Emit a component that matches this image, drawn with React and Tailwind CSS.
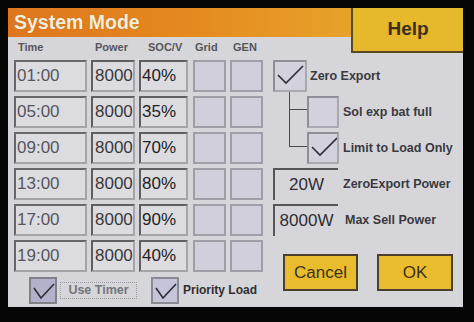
import React from 'react';

const rows = [
  { time: '01:00', power: '8000', soc: '40%' },
  { time: '05:00', power: '8000', soc: '35%' },
  { time: '09:00', power: '8000', soc: '70%' },
  { time: '13:00', power: '8000', soc: '80%' },
  { time: '17:00', power: '8000', soc: '90%' },
  { time: '19:00', power: '8000', soc: '40%' },
];

const font = { fontFamily: '"Liberation Sans", Arial, sans-serif' };

function Check({ w, h, points }) {
  return (
    <svg width={w} height={h} className="block">
      <polyline points={points} fill="none" stroke="#2e2e34" strokeWidth="1.6" />
    </svg>
  );
}

function CheckBox({ checked, className }) {
  return (
    <div className={`box-border border-2 border-t-[#8e8e96] border-l-[#8e8e96] border-r-[#a8a8b0] border-b-[#a8a8b0] ${className}`}>
      {checked && <Check w="100%" h="100%" points="3,13 11,21 28,4" />}
    </div>
  );
}

export default function App() {
  return (
    <div className="w-[474px] h-[322px] bg-[#060606] overflow-hidden pt-[8px] pl-[8px]" style={font}>
      <div className="w-[455px] h-[299px] bg-[#d6d6da] flex flex-col">
        {/* header */}
        <div className="flex items-start h-[29px] relative z-10">
          <div className="w-[343px] h-[29px] bg-gradient-to-r from-[#de761e] via-[#e4881f] to-[#e8a22a] flex items-center pl-[6px]">
            <span className="text-[19.5px] font-bold text-[#f6eedc] leading-none" style={{ textShadow: '0 0 1px #b0601a' }}>
              System Mode
            </span>
          </div>
          <div className="w-[112px] h-[45px] box-border bg-[#e6b82c] border-l-2 border-b-2 border-[#5a4a22] flex items-center justify-center">
            <span className="text-[19px] font-bold text-[#3a3018]">Help</span>
          </div>
        </div>

        {/* body */}
        <div className="flex">
          {/* table */}
          <div className="flex flex-col pl-[6px]">
            <div className="h-[23px] flex items-center pb-[2px] text-[11px] font-bold text-[#55555c]">
              <span className="w-[77px] pl-[4px]">Time</span>
              <span className="w-[48px] pl-[4px]">Power</span>
              <span className="w-[54px] pl-[9px]">SOC/V</span>
              <span className="w-[37px] pl-[2px]">Grid</span>
              <span className="w-[33px] pl-[3px]">GEN</span>
            </div>
            <div className="flex flex-col gap-[4px]">
              {rows.map((r) => (
                <div key={r.time} className="flex h-[32px]">
                  <div className="w-[73px] box-border border-2 border-t-[#66666c] border-l-[#66666c] border-r-[#a4a4aa] border-b-[#a4a4aa] bg-[#dcdce0] flex items-center pl-[1px] text-[17px] text-[#56565c]">
                    {r.time}
                  </div>
                  <div className="w-[44px] ml-[4px] box-border border-2 border-t-[#5e5e64] border-l-[#5e5e64] border-r-[#a4a4aa] border-b-[#a4a4aa] bg-[#dcdce0] flex items-center pl-[2px] text-[17px] text-[#38383c]">
                    {r.power}
                  </div>
                  <div className="w-[49px] ml-[4px] box-border border-2 border-t-[#5e5e64] border-l-[#5e5e64] border-r-[#a4a4aa] border-b-[#a4a4aa] bg-[#dcdce0] flex items-center pl-[1px] text-[17px] text-[#222226]">
                    {r.soc}
                  </div>
                  <div className="w-[33px] ml-[5px] box-border border-2 border-[#9e9ea6] bg-[#d0cfdb]" />
                  <div className="w-[33px] ml-[4px] box-border border-2 border-[#9e9ea6] bg-[#d0cfdb]" />
                </div>
              ))}
            </div>
            <div className="flex items-center mt-[4px] h-[28px]">
              <div className="ml-[15px] w-[28px] h-[27px] box-border border-2 border-[#808088] bg-[#b4b2ca]">
                <Check w="100%" h="100%" points="3,9 10,19 23,5" />
              </div>
              <div className="ml-[3px] w-[77px] h-[17px] box-border border border-dotted border-[#9a9aa0] flex items-center justify-center text-[12.5px] font-bold text-[#75757c]">
                Use Timer
              </div>
              <div className="ml-[14px] w-[28px] h-[27px] box-border border-2 border-[#8a8a92] bg-[#c6c4d8]">
                <Check w="100%" h="100%" points="3,9 10,19 23,5" />
              </div>
              <span className="ml-[4px] text-[12px] font-bold text-[#2e2e32]">Priority Load</span>
            </div>
          </div>

          {/* right panel */}
          <div className="flex flex-col ml-[10px] pt-[23px] text-[12.5px] font-bold text-[#3a3a40]">
            <div className="flex items-center h-[32px]">
              <CheckBox checked className="w-[34px] h-[32px] bg-[#d2d1dc]" />
              <span className="ml-[3px]">Zero Export</span>
            </div>
            <div className="flex h-[36px]">
              <div className="w-[34px] h-full">
                <div className="ml-[16px] w-[18px] h-full border-l border-[#4a4a50]">
                  <div className="h-[18px] border-b border-[#4a4a50]" />
                </div>
              </div>
              <CheckBox className="mt-[4px] w-[32px] h-[32px] bg-[#d2d1dc]" />
              <span className="ml-[4px] mt-[4px] h-[32px] flex items-center">Sol exp bat full</span>
            </div>
            <div className="flex h-[36px]">
              <div className="w-[34px] h-full">
                <div className="ml-[16px] w-[18px] h-[19px] border-l border-b border-[#4a4a50]" />
              </div>
              <CheckBox checked className="mt-[4px] w-[32px] h-[32px] bg-[#d2d1dc]" />
              <span className="ml-[4px] mt-[4px] h-[32px] flex items-center">Limit to Load Only</span>
            </div>
            <div className="flex items-center h-[32px] mt-[4px]">
              <div className="w-[65px] h-full box-border border-t-2 border-l-2 border-[#55555a] flex items-center justify-center text-[17px] font-normal text-[#2e2e34]">
                20W
              </div>
              <span className="ml-[5px]">ZeroExport Power</span>
            </div>
            <div className="flex items-center h-[32px] mt-[4px]">
              <div className="w-[65px] h-full box-border border-t-2 border-l-2 border-[#55555a] flex items-center justify-center text-[17px] font-normal text-[#2e2e34]">
                8000W
              </div>
              <span className="ml-[7px]">Max Sell Power</span>
            </div>
            <div className="flex mt-[18px] h-[37px]">
              <div className="ml-[10px] w-[75px] h-full box-border border-2 border-[#4a4030] bg-[#e8bc2c] flex items-center justify-center text-[17px] font-normal text-[#3a3018]">
                Cancel
              </div>
              <div className="ml-[19px] w-[76px] h-full box-border border-2 border-[#4a4030] bg-[#e8bc2c] flex items-center justify-center text-[17px] font-normal text-[#3a3018]">
                OK
              </div>
            </div>
          </div>
        </div>
      </div>
    </div>
  );
}
